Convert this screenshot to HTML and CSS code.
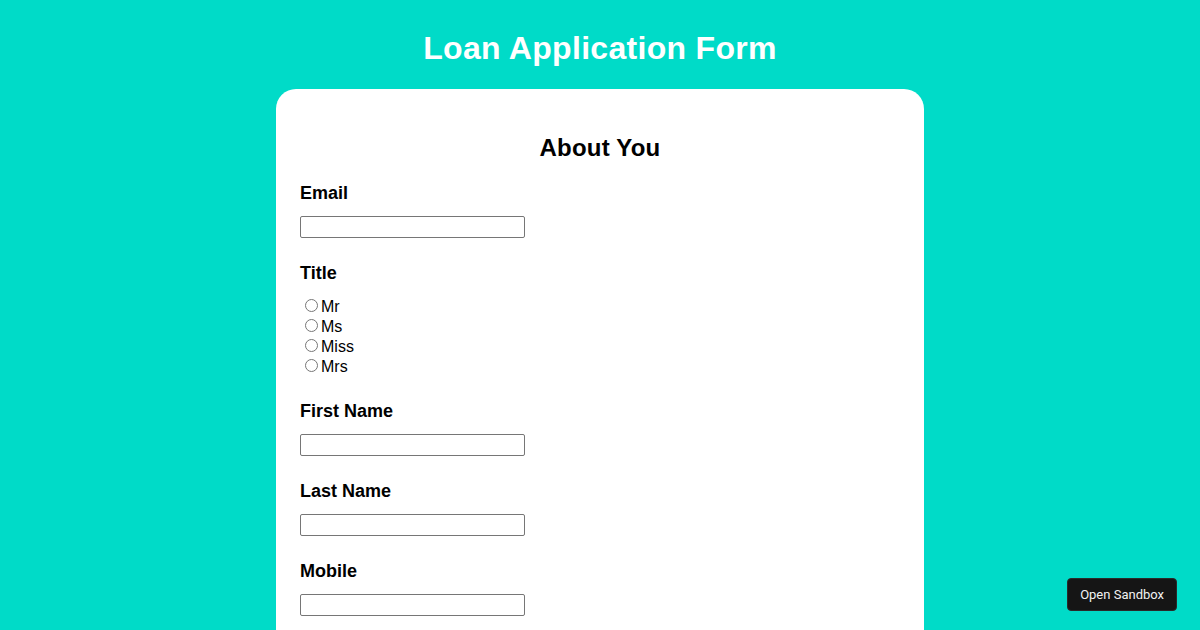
FILE: index.html
```html
<!DOCTYPE html>
<html lang="en">
<head>
<meta charset="utf-8">
<title>Loan Application Form</title>
<link rel="stylesheet" href="styles.css">
</head>
<body>
<header class="page-header">
  <h1 class="page-title">Loan Application Form</h1>
</header>
<main class="card">
  <h2 class="section-title">About You</h2>
  <div class="field">
    <label class="field-label" for="email">Email</label>
    <input class="text-input" id="email" type="email">
  </div>
  <div class="field">
    <span class="field-label">Title</span>
    <div class="radio-group">
      <div class="radio-row"><input type="radio" name="title" id="t-mr"><label for="t-mr">Mr</label></div>
      <div class="radio-row"><input type="radio" name="title" id="t-ms"><label for="t-ms">Ms</label></div>
      <div class="radio-row"><input type="radio" name="title" id="t-miss"><label for="t-miss">Miss</label></div>
      <div class="radio-row"><input type="radio" name="title" id="t-mrs"><label for="t-mrs">Mrs</label></div>
    </div>
  </div>
  <div class="field">
    <label class="field-label" for="first">First Name</label>
    <input class="text-input" id="first" type="text">
  </div>
  <div class="field">
    <label class="field-label" for="last">Last Name</label>
    <input class="text-input" id="last" type="text">
  </div>
  <div class="field">
    <label class="field-label" for="mobile">Mobile</label>
    <input class="text-input" id="mobile" type="tel">
  </div>
</main>
<button class="sandbox-btn" type="button">Open Sandbox</button>
</body>
</html>
```

FILE: styles.css
```css
html, body {
  margin: 0;
  padding: 0;
}
body {
  background: #00dbc8;
  font-family: "Liberation Sans", Arial, sans-serif;
  color: #000;
  overflow: hidden;
}
.page-header {
  padding: 30px 0 22px;
}
.page-title {
  margin: 0;
  text-align: center;
  color: #fff;
  font-size: 32px;
  line-height: 37px;
  font-weight: bold;
  letter-spacing: 0.3px;
}
.card {
  width: 648px;
  box-sizing: border-box;
  margin: 0 auto;
  background: #fff;
  border-radius: 20px;
  padding: 45px 24px 40px;
}
.section-title {
  margin: 0 0 21px;
  text-align: center;
  font-size: 24px;
  line-height: 28px;
  font-weight: bold;
  letter-spacing: 0.2px;
}
.field {
  margin-bottom: 25px;
}
.field-label {
  display: block;
  font-size: 18px;
  line-height: 21px;
  font-weight: bold;
  margin-bottom: 12px;
}
.text-input {
  display: block;
  box-sizing: border-box;
  width: 225px;
  height: 22px;
  margin: 0;
  padding: 1px 2px;
  border: 1px solid #767676;
  border-radius: 2px;
  font: 13px "Liberation Sans", Arial, sans-serif;
}
.radio-group {
  font-size: 16px;
}
.radio-row {
  line-height: 20px;
  height: 20px;
}
.radio-row input {
  margin: 3px 3px 0 5px;
}
.sandbox-btn {
  position: fixed;
  right: 23px;
  bottom: 19px;
  height: 33px;
  padding: 0 12px;
  background: #151515;
  color: #f2f2f2;
  border: 1px solid #2a2a2a;
  border-radius: 4px;
  font-family: Roboto, "Noto Sans", sans-serif;
  font-size: 13px;
  cursor: pointer;
}
```
